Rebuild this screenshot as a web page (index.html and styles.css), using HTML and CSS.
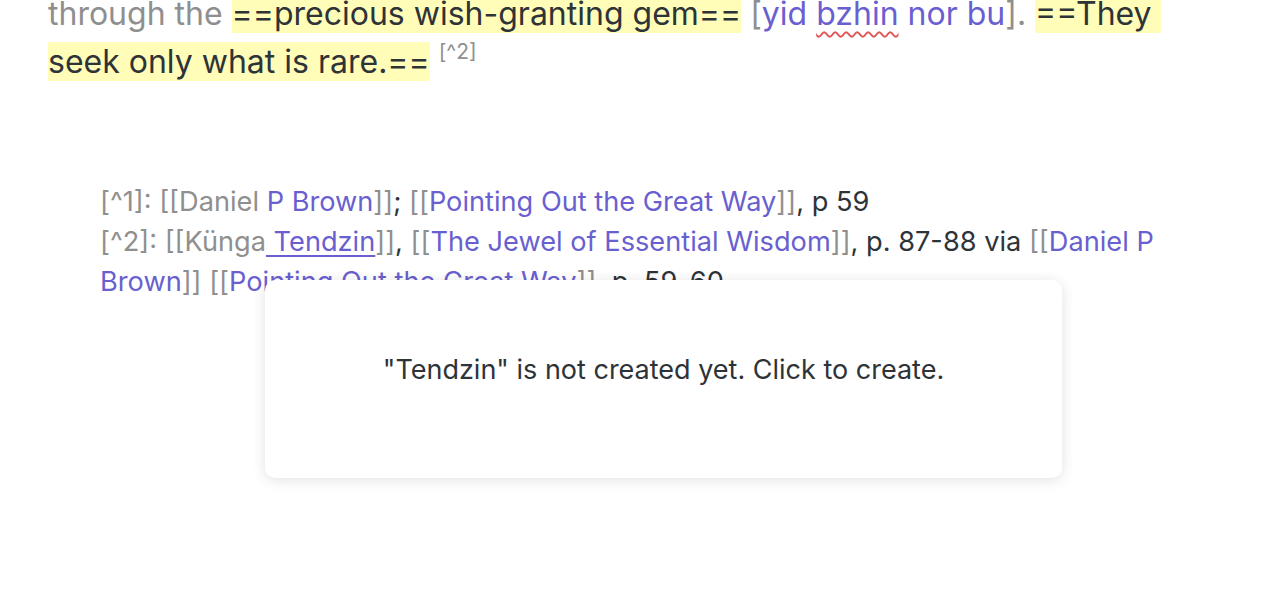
FILE: index.html
```html
<!DOCTYPE html>
<html>
<head>
<meta charset="utf-8">
<link rel="stylesheet" href="styles.css">
</head>
<body>
<div class="editor">
  <p class="para"><span class="muted">through the </span><mark class="hl">==precious wish-granting gem==</mark> <span class="muted">[</span><span class="link">yid <span class="spell">bzhin</span> nor bu</span><span class="muted">]. </span><mark class="hl">==They&nbsp; seek only what is rare.==</mark> <sup class="fnref">[^2]</sup></p>

  <div class="footnotes">
    <p class="fn"><span class="muted">[^1]: [[Daniel</span><span class="link"> P Brown</span><span class="muted">]]</span>; <span class="muted">[[</span><span class="link">Pointing Out the Great Way</span><span class="muted">]]</span>, p 59</p>
    <p class="fn"><span class="muted">[^2]: [[Künga</span><span class="link hover"> Tendzin</span><span class="muted">]]</span>, <span class="muted">[[</span><span class="link">The Jewel of Essential Wisdom</span><span class="muted">]]</span>, p. 87-88 via <span class="muted">[[</span><span class="link">Daniel P Brown</span><span class="muted">]]</span> <span class="muted">[[</span><span class="link">Pointing Out the Great Way</span><span class="muted">]]</span>, p. 59-60</p>
  </div>

  <div class="popover">
    <div class="popover-text">"Tendzin" is not created yet. Click to create.</div>
  </div>
</div>
</body>
</html>
```

FILE: styles.css
```css
html, body {
  margin: 0;
  padding: 0;
  background: #ffffff;
  overflow: hidden;
}
body {
  font-family: Inter, "Noto Sans", sans-serif;
  color: #2e3338;
  width: 1274px;
  height: 590px;
}
.editor {
  position: relative;
  padding-left: 48px;
  width: 1180px;
}
.para {
  margin: -10px 0 0 0;
  font-size: 32px;
  line-height: 48px;
}
.muted {
  color: #8f8f8f;
}
.link {
  color: #6a5fd0;
}
.hover {
  text-decoration: underline;
  text-decoration-thickness: 2px;
  text-underline-offset: 4px;
}
.spell {
  text-decoration: underline wavy #e25555;
  text-decoration-thickness: 1.5px;
  text-underline-offset: 6px;
}
.hl {
  background: #fffdb8;
  color: #2e3338;
}
.fnref {
  color: #8f8f8f;
  font-size: 21px;
  vertical-align: 0;
  position: relative;
  top: -14px;
  line-height: 0;
}
.footnotes {
  margin-top: 96px;
  padding-left: 52px;
}
.fn {
  margin: 0;
  font-size: 27.2px;
  line-height: 40px;
}
.popover {
  position: absolute;
  left: 265px;
  top: 290px;
  width: 797px;
  height: 198px;
  background: #ffffff;
  border-radius: 10px;
  box-shadow: 0 2px 14px rgba(0, 0, 0, 0.12);
  display: flex;
  align-items: center;
  justify-content: center;
}
.popover-text {
  font-size: 27px;
  color: #2e3338;
  margin-top: -20px;
}
```
